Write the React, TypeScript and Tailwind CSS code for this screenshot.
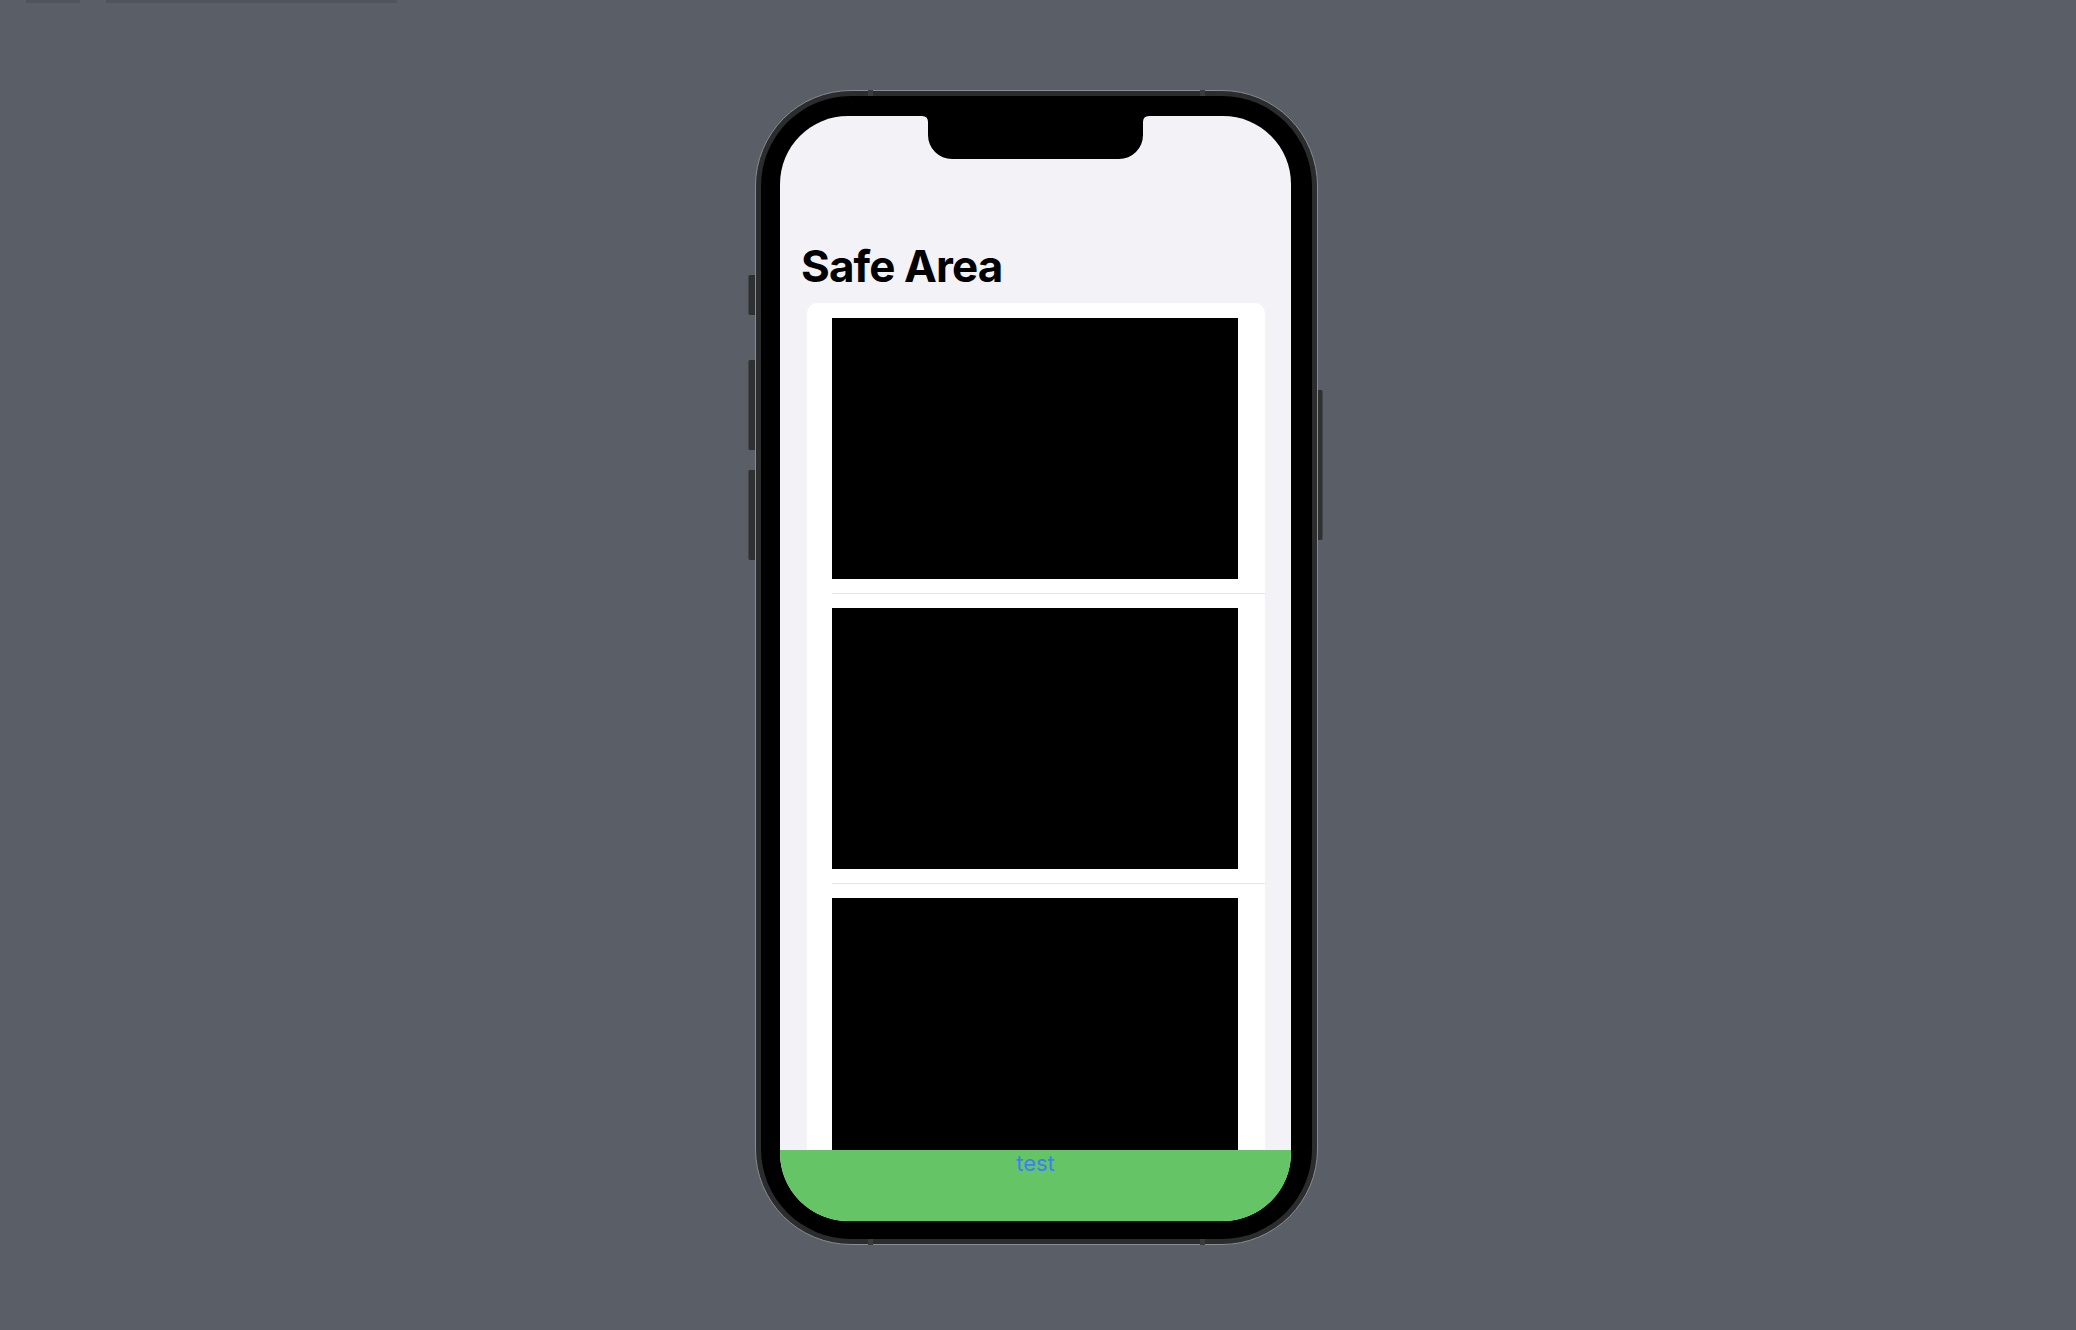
const rows = [0, 1, 2, 3];

function Notch() {
  return (
    <svg
      className="absolute top-0 left-[142px]"
      width="227"
      height="44"
      viewBox="0 0 227 44"
    >
      <path
        d="M0 0 H227 Q221 0 221 6 V19 A24 24 0 0 1 197 43 H30 A24 24 0 0 1 6 19 V6 Q6 0 0 0 Z"
        fill="#000"
      />
    </svg>
  );
}

function Row({ last }: { last: boolean }) {
  return (
    <div>
      <div className="pt-[14px] pb-[14px] pl-[25px] pr-[27px]">
        <div className="h-[261px] bg-black" />
      </div>
      {!last && <div className="ml-[25px] h-px bg-[#e5e5ea]" />}
    </div>
  );
}

export default function App() {
  return (
    <div
      className="relative w-full h-[1330px] overflow-hidden bg-[#5a5e66] flex justify-center"
      style={{ fontFamily: 'Inter, "Noto Sans", sans-serif' }}
    >
      {/* faint toolbar shadow at top */}
      <div className="absolute top-0 left-[26px] w-[54px] h-[3px] bg-black/10" />
      <div className="absolute top-0 left-[106px] w-[291px] h-[3px] bg-black/10" />

      <div className="relative mt-[90px] ml-[-3px] w-[563px] h-[1155px]">
        {/* side buttons */}
        <div className="absolute left-[-7px] top-[185px] w-[7px] h-[40px] rounded-l-[2px] bg-[#2f3032] border-l border-[#45474a]" />
        <div className="absolute left-[-7px] top-[270px] w-[7px] h-[90px] rounded-l-[2px] bg-[#2f3032] border-l border-[#45474a]" />
        <div className="absolute left-[-7px] top-[380px] w-[7px] h-[90px] rounded-l-[2px] bg-[#2f3032] border-l border-[#45474a]" />
        <div className="absolute right-[-5px] top-[300px] w-[5px] h-[150px] rounded-r-[2px] bg-[#2f3032] border-r border-[#45474a]" />

        {/* frame */}
        <div className="h-full rounded-[96px] border border-[#8a8b8e] bg-[#2b2c2e] p-[5px]">
          <div className="h-full rounded-[90px] bg-black pt-[20px] pl-[19px] pr-[21px] pb-[18px]">
            <div className="relative h-full rounded-[68px] overflow-hidden bg-[#f2f2f7] flex flex-col">
              <div className="flex-1 overflow-hidden">
                <h1 className="pt-[124px] pl-[21px] text-[44px] leading-[52px] font-bold tracking-[-0.9px] text-black">
                  Safe Area
                </h1>
                <div className="mt-[11px] ml-[27px] mr-[26px] rounded-t-[10px] bg-white pt-px">
                  {rows.map((r) => (
                    <Row key={r} last={r === rows.length - 1} />
                  ))}
                </div>
              </div>
              <div className="h-[71px] shrink-0 bg-[#65c466] text-center">
                <span className="text-[22px] leading-[26px] text-[#3a80f6]">test</span>
              </div>
              <Notch />
            </div>
          </div>
        </div>

        {/* antenna bands */}
        <div className="absolute top-0 left-[113px] w-[5px] h-[6px] bg-[#3a3b3d]" />
        <div className="absolute top-0 right-[113px] w-[5px] h-[6px] bg-[#3a3b3d]" />
        <div className="absolute bottom-0 left-[113px] w-[5px] h-[6px] bg-[#3a3b3d]" />
        <div className="absolute bottom-0 right-[113px] w-[5px] h-[6px] bg-[#3a3b3d]" />
      </div>
    </div>
  );
}
